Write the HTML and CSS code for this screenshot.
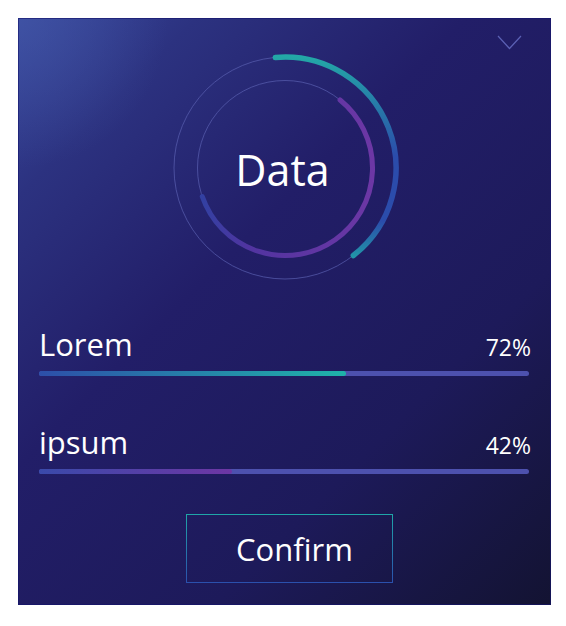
FILE: index.html
```html
<!DOCTYPE html>
<html lang="en">

<head>
    <meta charset="UTF-8">
    <meta name="viewport" content="width=device-width, initial-scale=1.0">
    <title>Data</title>
    <link rel="stylesheet" href="styles.css">
</head>

<body>
    <div class="panel">
        <svg class="chevron" width="25" height="15" viewBox="0 0 25 15">
            <polyline points="1,1 12.5,13.5 24,1" fill="none" stroke="#5b60b4" stroke-width="1.2" />
        </svg>

        <div class="gauge">
            <svg width="240" height="240" viewBox="0 0 240 240">
                <defs>
                    <linearGradient id="outerGrad" x1="0" y1="0" x2="0" y2="240" gradientUnits="userSpaceOnUse">
                        <stop offset="0" stop-color="#22b0a6" />
                        <stop offset="0.45" stop-color="#2b4cab" />
                        <stop offset="0.72" stop-color="#2b4cab" />
                        <stop offset="0.9" stop-color="#1fa4a8" />
                    </linearGradient>
                    <linearGradient id="innerGrad" x1="30" y1="0" x2="210" y2="0" gradientUnits="userSpaceOnUse">
                        <stop offset="0" stop-color="#2e42a2" />
                        <stop offset="0.3" stop-color="#5134a0" />
                        <stop offset="1" stop-color="#6d37a5" />
                    </linearGradient>
                </defs>
                <circle cx="120" cy="120" r="111" fill="none" stroke="#5a5fb0" stroke-opacity="0.7" stroke-width="1" />
                <circle cx="120" cy="120" r="87.5" fill="none" stroke="#5a5fb0" stroke-opacity="0.7" stroke-width="1" />
                <!-- outer arc: -5deg to 142deg -->
                <path d="M110.33 9.42 A111 111 0 0 1 188.34 207.47" fill="none" stroke="url(#outerGrad)"
                    stroke-width="5.5" stroke-linecap="round" />
                <!-- inner arc: 39deg to 251deg -->
                <path d="M175.07 52 A87.5 87.5 0 1 1 37.27 148.49" fill="none" stroke="url(#innerGrad)"
                    stroke-width="5" stroke-linecap="round" />
            </svg>
            <div class="gauge-label">Data</div>
        </div>

        <div class="stat">
            <div class="stat-head">
                <span class="stat-name">Lorem</span>
                <span class="stat-value">72%</span>
            </div>
            <div class="track">
                <div class="fill fill-teal" style="width: 307px"></div>
            </div>
        </div>

        <div class="stat stat-second">
            <div class="stat-head">
                <span class="stat-name">ipsum</span>
                <span class="stat-value">42%</span>
            </div>
            <div class="track">
                <div class="fill fill-purple" style="width: 193px"></div>
            </div>
        </div>

        <button class="confirm">Confirm</button>
    </div>
</body>

</html>
```

FILE: styles.css
```css
* {
    margin: 0;
    padding: 0;
    box-sizing: border-box;
}

body {
    background-color: #fff;
    padding: 18px;
    font-family: "Open Sans", "Noto Sans", sans-serif;
    color: #fff;
}

.panel {
    position: relative;
    width: 533px;
    height: 587px;
    padding: 30px 22px 0 21px;
    display: flex;
    flex-direction: column;
    background:
        radial-gradient(circle at 0 0, rgba(70, 92, 172, 0.55) 0, rgba(60, 80, 160, 0) 150px),
        linear-gradient(135deg, #37469a 0%, #2c3280 16%, #221e68 40%, #1d1a5a 70%, #131332 100%);
    box-shadow: inset 0 0 0 1px rgba(20, 20, 110, 0.6);
}

.chevron {
    position: absolute;
    top: 17px;
    right: 29px;
}

.gauge {
    display: grid;
    align-self: center;
    align-items: center;
    justify-items: center;
    width: 240px;
    height: 240px;
    margin-left: 1px;
}

.gauge svg,
.gauge-label {
    grid-area: 1 / 1;
}

.gauge-label {
    font-size: 43px;
    line-height: 1;
    margin-top: 3px;
    margin-right: 4px;
}

.stat {
    margin-top: 38px;
}

.stat-second {
    margin-top: 48px;
}

.stat-head {
    display: flex;
    justify-content: space-between;
    align-items: baseline;
    height: 36px;
    line-height: 36px;
}

.stat-name {
    font-size: 31px;
}

.stat-value {
    font-size: 23px;
    margin-right: -2px;
}

.track {
    height: 5px;
    margin-top: 9px;
    border-radius: 3px;
    background-color: #4d51ae;
}

.fill {
    height: 100%;
    border-radius: 3px;
}

.fill-teal {
    background: linear-gradient(90deg, #2d4fa9, #1fb3a9);
}

.fill-purple {
    background: linear-gradient(90deg, #3a4aaa, #6d36a4);
}

.confirm {
    width: 207px;
    height: 69px;
    margin: 40px 0 0 147px;
    padding-left: 10px;
    background: transparent;
    color: #fff;
    font-family: "Open Sans", "Noto Sans", sans-serif;
    font-size: 31px;
    border: 1px solid;
    border-image: linear-gradient(#1fa6a8, #2b50ad) 1;
}
```
